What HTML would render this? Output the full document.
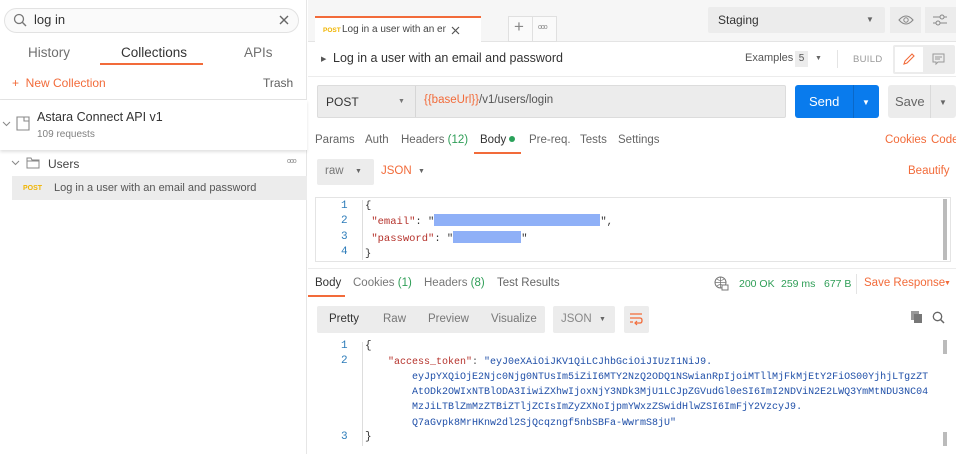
<!DOCTYPE html>
<html><head><meta charset="utf-8"><style>
*{box-sizing:border-box;margin:0;padding:0}
body{width:956px;height:454px;overflow:hidden;background:#fff;font-family:"Liberation Sans","DejaVu Sans",sans-serif;font-size:12px;color:#505050;position:relative}
.a{position:absolute;white-space:nowrap}
.o{color:#f26b3a}.g{color:#2f9e57}
.mono{font-family:"Liberation Mono","DejaVu Sans Mono",monospace;font-size:10px}
.ln{color:#2b7bb9;font-family:"Liberation Mono",monospace;font-size:11px}
.k{color:#b5322b}.s{color:#1f4fa8}
</style></head><body>
<!-- sidebar -->
<div class="a" style="left:0;top:0;width:307px;height:454px;background:#fff;border-right:1px solid #e6e6e6"></div>
<div class="a" style="left:4px;top:8px;width:295px;height:25px;border:1px solid #e2e2e2;border-radius:13px;background:#fafafa"></div>
<svg class="a" style="left:13px;top:13px" width="14" height="14"><circle cx="6" cy="6" r="4.5" fill="none" stroke="#777" stroke-width="1.3"/><path d="M9.3 9.3L13 13" stroke="#777" stroke-width="1.4"/></svg>
<div class="a" style="left:34px;top:12px;font-size:13px;color:#333">log in</div>
<svg class="a" style="left:279px;top:15px" width="10" height="10"><path d="M1 1L9 9M9 1L1 9" stroke="#666" stroke-width="1.4"/></svg>
<div class="a" style="left:28px;top:45px;font-size:13.5px;color:#707070">History</div>
<div class="a" style="left:121px;top:45px;font-size:13.5px;color:#333">Collections</div>
<div class="a" style="left:244px;top:45px;font-size:13.5px;color:#707070">APIs</div>
<div class="a" style="left:100px;top:63px;width:103px;height:2px;background:#f26b3a"></div>
<div class="a o" style="left:12px;top:76px;font-size:12px">+&nbsp; New Collection</div>
<div class="a" style="left:263px;top:76px;font-size:12px;color:#606060">Trash</div>
<div class="a" style="left:0;top:99px;width:307px;height:1px;background:#e4e4e4"></div>
<div class="a" style="left:0;top:100px;width:307px;height:50px;background:#fff;box-shadow:0 2px 3px rgba(0,0,0,.12)"></div>
<svg class="a" style="left:2px;top:121px" width="9" height="6"><path d="M1 1L4.5 4.5L8 1" stroke="#888" fill="none"/></svg>
<svg class="a" style="left:16px;top:116px" width="14" height="15"><path d="M1 1H13V14H1Z M8 1V5H13" fill="none" stroke="#888" stroke-width="1.1"/></svg>
<div class="a" style="left:37px;top:110px;font-size:12.5px;color:#333">Astara Connect API v1</div>
<div class="a" style="left:37px;top:129px;font-size:10px;color:#808080">109 requests</div>
<svg class="a" style="left:11px;top:160px" width="9" height="6"><path d="M1 1L4.5 4.5L8 1" stroke="#888" fill="none"/></svg>
<svg class="a" style="left:26px;top:157px" width="14" height="12"><path d="M1 1H5L6 3H13V11H1Z M1 4H13" fill="none" stroke="#888" stroke-width="1"/></svg>
<div class="a" style="left:48px;top:157px;font-size:12px;color:#444">Users</div>
<div class="a" style="left:287px;top:158px;font-size:7px;color:#888;letter-spacing:-1px">ooo</div>
<div class="a" style="left:12px;top:176px;width:295px;height:24px;background:#ececec"></div>
<div class="a" style="left:23px;top:185px;font-size:7px;font-weight:bold;color:#f0b400">POST</div>
<div class="a" style="left:54px;top:182px;font-size:11px;color:#555">Log in a user with an email and password</div>

<!-- top tab bar -->
<div class="a" style="left:308px;top:0;width:648px;height:42px;background:#f6f6f6;border-bottom:1px solid #e4e4e4"></div>
<div class="a" style="left:315px;top:16px;width:166px;height:27px;background:#fff;border-top:2px solid #f26b3a"></div>
<div class="a" style="left:323px;top:27px;font-size:6.5px;font-weight:bold;color:#f0b400">POST</div>
<div class="a" style="left:342px;top:24px;font-size:10px;color:#444;width:104px;overflow:hidden">Log in a user with an email a...</div>
<svg class="a" style="left:451px;top:26px" width="9" height="9"><path d="M1 1L8 8M8 1L1 8" stroke="#555" stroke-width="1.2"/></svg>
<div class="a" style="left:508px;top:16px;width:49px;height:26px;border:1px solid #e0e0e0;background:#fafafa"></div>
<div class="a" style="left:532px;top:16px;width:1px;height:26px;background:#e0e0e0"></div>
<div class="a" style="left:514px;top:17px;font-size:17px;color:#888">+</div>
<div class="a" style="left:538px;top:24px;font-size:7px;color:#888;letter-spacing:-1px">ooo</div>
<div class="a" style="left:708px;top:7px;width:177px;height:26px;background:#ececec;border-radius:2px"></div>
<div class="a" style="left:718px;top:13px;font-size:12px;color:#333">Staging</div>
<div class="a" style="left:866px;top:15px;font-size:8px;color:#666">▼</div>
<div class="a" style="left:890px;top:7px;width:31px;height:26px;background:#ececec"></div>
<svg class="a" style="left:898px;top:14px" width="16" height="12"><path d="M1 6Q8 -2 15 6Q8 14 1 6Z" fill="none" stroke="#888" stroke-width="1.1"/><circle cx="8" cy="6" r="2.2" fill="none" stroke="#888"/></svg>
<div class="a" style="left:925px;top:7px;width:31px;height:26px;background:#ececec"></div>
<svg class="a" style="left:932px;top:13px" width="16" height="13"><path d="M1 4H15M1 10H15" stroke="#888"/><circle cx="10" cy="4" r="2" fill="#ececec" stroke="#888"/><circle cx="6" cy="10" r="2" fill="#ececec" stroke="#888"/></svg>

<!-- title row -->
<div class="a" style="left:321px;top:55px;font-size:7px;color:#555">▶</div>
<div class="a" style="left:333px;top:51px;font-size:12.5px;color:#333">Log in a user with an email and password</div>
<div class="a" style="left:745px;top:52px;font-size:11px;color:#555">Examples</div>
<div class="a" style="left:795px;top:51px;width:13px;height:16px;background:#ececec;font-size:10px;text-align:center;line-height:16px;color:#555">5</div>
<div class="a" style="left:815px;top:55px;font-size:7px;color:#666">▼</div>
<div class="a" style="left:837px;top:50px;width:1px;height:18px;background:#e4e4e4"></div>
<div class="a" style="left:853px;top:54px;font-size:9.5px;color:#999;letter-spacing:.3px">BUILD</div>
<div class="a" style="left:893px;top:45px;width:62px;height:29px;background:#ececec;border-radius:2px"></div>
<div class="a" style="left:895px;top:47px;width:28px;height:25px;background:#fff"></div>
<svg class="a" style="left:902px;top:52px" width="14" height="14"><path d="M2 12L3 9L10 2L12 4L5 11Z" fill="none" stroke="#f26b3a" stroke-width="1.1"/></svg>
<svg class="a" style="left:932px;top:53px" width="13" height="13"><path d="M1 1H12V9H6L4 11V9H1Z M3 4H10M3 6H8" fill="none" stroke="#999"/></svg>
<div class="a" style="left:308px;top:76px;width:648px;height:1px;background:#ececec"></div>

<!-- url row -->
<div class="a" style="left:317px;top:85px;width:469px;height:33px;background:#ececec;border:1px solid #dcdcdc;border-radius:2px"></div>
<div class="a" style="left:415px;top:86px;width:1px;height:31px;background:#d6d6d6"></div>
<div class="a" style="left:326px;top:95px;font-size:12px;color:#333">POST</div>
<div class="a" style="left:398px;top:98px;font-size:7px;color:#777">▼</div>
<div class="a" style="left:424px;top:94px;font-size:11.5px;color:#555"><span class="o">{{baseUrl}}</span>/v1/users/login</div>
<div class="a" style="left:795px;top:85px;width:84px;height:33px;background:#097bed;border-radius:3px"></div>
<div class="a" style="left:853px;top:85px;width:1px;height:33px;background:#0a68c8"></div>
<div class="a" style="left:809px;top:94px;font-size:13px;color:#fff">Send</div>
<div class="a" style="left:862px;top:98px;font-size:8px;color:#fff">▼</div>
<div class="a" style="left:888px;top:85px;width:68px;height:33px;background:#ececec;border-radius:3px"></div>
<div class="a" style="left:930px;top:85px;width:1px;height:33px;background:#dadada"></div>
<div class="a" style="left:895px;top:94px;font-size:13px;color:#666">Save</div>
<div class="a" style="left:939px;top:98px;font-size:8px;color:#666">▼</div>

<!-- request tabs -->
<div class="a" style="left:315px;top:134px;font-size:11.5px;color:#666">Params</div>
<div class="a" style="left:365px;top:134px;font-size:11.5px;color:#666">Auth</div>
<div class="a" style="left:401px;top:134px;font-size:11.5px;color:#666">Headers <span class="g">(12)</span></div>
<div class="a" style="left:480px;top:134px;font-size:11.5px;color:#333">Body <span style="display:inline-block;width:6px;height:6px;border-radius:3px;background:#2aa15a;vertical-align:1px"></span></div>
<div class="a" style="left:474px;top:152px;width:47px;height:2px;background:#f26b3a"></div>
<div class="a" style="left:529px;top:134px;font-size:11.5px;color:#666">Pre-req.</div>
<div class="a" style="left:580px;top:134px;font-size:11.5px;color:#666">Tests</div>
<div class="a" style="left:618px;top:134px;font-size:11.5px;color:#666">Settings</div>
<div class="a o" style="left:885px;top:134px;font-size:11.5px">Cookies</div>
<div class="a o" style="left:931px;top:134px;font-size:11.5px">Code</div>
<div class="a" style="left:317px;top:159px;width:57px;height:26px;background:#ececec;border-radius:2px"></div>
<div class="a" style="left:325px;top:165px;font-size:11.5px;color:#777">raw</div>
<div class="a" style="left:355px;top:168px;font-size:7px;color:#666">▼</div>
<div class="a o" style="left:381px;top:165px;font-size:11.5px">JSON</div>
<div class="a" style="left:418px;top:168px;font-size:7px;color:#666">▼</div>
<div class="a o" style="left:908px;top:165px;font-size:11.5px">Beautify</div>

<!-- request editor -->
<div class="a" style="left:315px;top:197px;width:636px;height:65px;border:1px solid #e4e4e4"></div>
<div class="a" style="left:943px;top:199px;width:4px;height:61px;background:#bbb"></div>
<div class="a" style="left:362px;top:200px;width:1px;height:60px;background:#ddd"></div>
<div class="a ln" style="left:341px;top:199px;line-height:15.3px">1<br>2<br>3<br>4</div>
<div class="a mono" style="left:365px;top:199px;line-height:15.3px;font-size:10.5px;color:#333">{<br>&nbsp;<span class="k">"email"</span>: "<span style="display:inline-block;width:166px;height:12px;background:#8fb0f7;vertical-align:-2px"></span>",<br>&nbsp;<span class="k">"password"</span>: "<span style="display:inline-block;width:68px;height:12px;background:#8fb0f7;vertical-align:-2px"></span>"<br>}</div>

<!-- response -->
<div class="a" style="left:308px;top:268px;width:648px;height:1px;background:#ececec"></div>
<div class="a" style="left:315px;top:277px;font-size:11.5px;color:#333">Body</div>
<div class="a" style="left:308px;top:295px;width:37px;height:2px;background:#f26b3a"></div>
<div class="a" style="left:353px;top:277px;font-size:11.5px;color:#777">Cookies <span class="g">(1)</span></div>
<div class="a" style="left:424px;top:277px;font-size:11.5px;color:#777">Headers <span class="g">(8)</span></div>
<div class="a" style="left:497px;top:277px;font-size:11.5px;color:#666">Test Results</div>
<svg class="a" style="left:714px;top:276px" width="15" height="15"><circle cx="6.5" cy="6.5" r="5.5" fill="none" stroke="#777"/><path d="M1 6.5H12M6.5 1V12M3 3Q6.5 6 10 3M3 10Q6.5 7 10 10" fill="none" stroke="#777" stroke-width=".8"/><rect x="8" y="9" width="6" height="5" fill="#fff" stroke="#777"/></svg>
<div class="a g" style="left:739px;top:278px;font-size:10.5px">200 OK</div>
<div class="a g" style="left:781px;top:278px;font-size:10.5px">259 ms</div>
<div class="a g" style="left:824px;top:278px;font-size:10.5px">677 B</div>
<div class="a" style="left:856px;top:274px;width:1px;height:20px;background:#e4e4e4"></div>
<div class="a o" style="left:864px;top:277px;font-size:11.5px">Save Response</div>
<div class="a o" style="left:944px;top:280px;font-size:7px">▼</div>

<div class="a" style="left:317px;top:306px;width:228px;height:27px;background:#ececec;border-radius:2px"></div>
<div class="a" style="left:329px;top:313px;font-size:11.5px;color:#333">Pretty</div>
<div class="a" style="left:383px;top:313px;font-size:11.5px;color:#777">Raw</div>
<div class="a" style="left:428px;top:313px;font-size:11.5px;color:#777">Preview</div>
<div class="a" style="left:491px;top:313px;font-size:11.5px;color:#777">Visualize</div>
<div class="a" style="left:553px;top:306px;width:62px;height:27px;background:#ececec;border-radius:2px"></div>
<div class="a" style="left:561px;top:313px;font-size:11.5px;color:#888">JSON</div>
<div class="a" style="left:599px;top:316px;font-size:7px;color:#666">▼</div>
<div class="a" style="left:624px;top:306px;width:25px;height:27px;background:#ececec;border-radius:2px"></div>
<svg class="a" style="left:628px;top:311px" width="16" height="16"><path d="M2 3H14M2 7H12Q14 7 14 9.5Q14 12 12 12H8M2 11H5" fill="none" stroke="#f26b3a" stroke-width="1.3"/><path d="M9 10L7 12L9 14" fill="none" stroke="#f26b3a" stroke-width="1.2"/></svg>
<svg class="a" style="left:911px;top:311px" width="12" height="13"><rect x="0" y="0" width="8" height="9" fill="#999"/><rect x="3" y="3" width="8" height="9" fill="#777"/></svg>
<svg class="a" style="left:932px;top:311px" width="13" height="13"><circle cx="5.5" cy="5.5" r="4.2" fill="none" stroke="#666" stroke-width="1.3"/><path d="M8.5 8.5L12 12" stroke="#666" stroke-width="1.5"/></svg>

<div class="a" style="left:362px;top:342px;width:1px;height:104px;background:#ddd"></div>
<div class="a" style="left:943px;top:340px;width:4px;height:14px;background:#bbb"></div>
<div class="a" style="left:943px;top:432px;width:4px;height:14px;background:#bbb"></div>
<div class="a ln" style="left:341px;top:340px">1</div>
<div class="a ln" style="left:341px;top:355px">2</div>
<div class="a ln" style="left:341px;top:431px">3</div>
<div class="a mono" style="left:365px;top:340px;font-size:11px;color:#333">{</div>
<div class="a mono" style="left:365px;top:431px;font-size:11px;color:#333">}</div>
<div class="a mono" style="left:388px;top:355px;line-height:15.2px"><span class="k">"access_token"</span>: <span class="s">"eyJ0eXAiOiJKV1QiLCJhbGciOiJIUzI1NiJ9.</span></div>
<div class="a mono s" style="left:412px;top:370px;line-height:15.2px">eyJpYXQiOjE2Njc0Njg0NTUsIm5iZiI6MTY2NzQ2ODQ1NSwianRpIjoiMTllMjFkMjEtY2FiOS00YjhjLTgzZT<br>AtODk2OWIxNTBlODA3IiwiZXhwIjoxNjY3NDk3MjU1LCJpZGVudGl0eSI6ImI2NDViN2E2LWQ3YmMtNDU3NC04<br>MzJiLTBlZmMzZTBiZTljZCIsImZyZXNoIjpmYWxzZSwidHlwZSI6ImFjY2VzcyJ9.<br>Q7aGvpk8MrHKnw2dl2SjQcqzngf5nbSBFa-WwrmS8jU"</div>
</body></html>
